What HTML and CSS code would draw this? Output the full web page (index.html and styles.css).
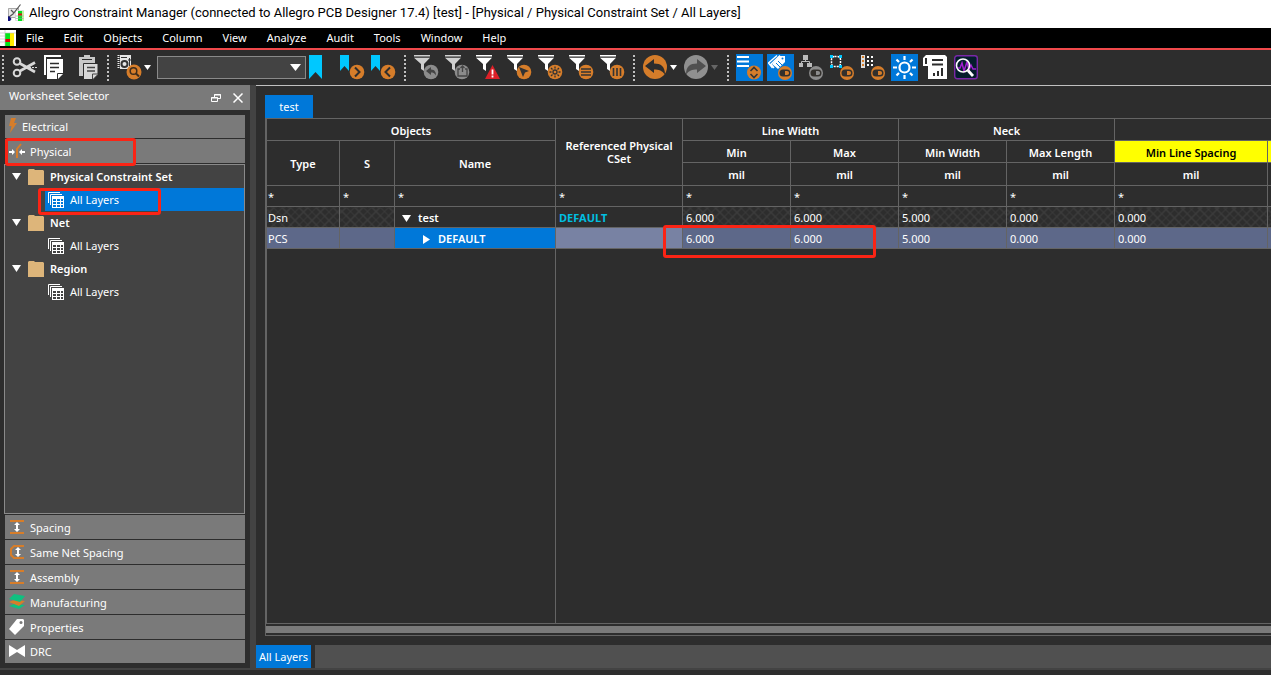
FILE: index.html
```html
<!DOCTYPE html>
<html lang="en">
  <head>
    <meta charset="UTF-8" />
    <meta name="viewport" content="width=device-width, initial-scale=1.0" />
    <title>Allegro Constraint Manager</title>
    <link rel="stylesheet" href="styles.css">
  </head>
  <body>
    <!-- Shared icon parts -->
    <svg class="sprite" aria-hidden="true">
      <symbol id="funnel" viewBox="0 0 25 25">
        <path d="M0 0h16v1.6H0zM0 2.8h16L10 9v7l-3-2V9z" />
      </symbol>
      <symbol id="flag" viewBox="0 0 25 25">
        <path fill="#00c8ff" d="M0 0h9v16l-4.500-5L0 16z" />
      </symbol>
      <symbol id="toggle" viewBox="0 0 14 14">
        <circle cx="7" cy="7" r="7" />
        <rect x="2.200" y="4.200" width="9.600" height="5.600" rx="2.800" fill="none" stroke="#33302c" stroke-width="1.400" />
        <path fill="#33302c" d="M3 5h4v4H3z" />
      </symbol>
      <symbol id="folder" viewBox="0 0 16 16">
        <path fill="#ddb57a" d="M0 1l1-1h5l1 1h8l1 1v14H0z" />
      </symbol>
      <symbol id="sheets" viewBox="0 0 16 16">
        <path fill="none" stroke="currentColor" d="M.5 11V.5H12M2.500 13V2.500H14" />
        <path fill="currentColor" fill-rule="evenodd" d="M4 4h12v12H4zM5 7v2h3V7zM9 7v2h3V7zM13 7v2h2V7zM5 10v2h3v-2zM9 10v2h3v-2zM13 10v2h2v-2zM5 13v2h3v-2zM9 13v2h3v-2zM13 13v2h2v-2z" />
      </symbol>
      <symbol id="spacing" viewBox="0 0 16 16">
        <path fill="#d67d2a" d="M1 1h14v2H1zM1 13h14v2H1z" />
        <path fill="#fff" d="M8 3l3 3H9v4h2l-3 3-3-3h2V6H5z" />
      </symbol>
    </svg>

    <header class="titlebar">
      <svg width="16" height="18" viewBox="0 0 16 18">
        <path fill="#e8e8e8" stroke="#888" stroke-width=".7" d="M.5 4.500h10v9H.5z" />
        <path fill="#fff" stroke="#ccc" stroke-width=".6" d="M7.500 6.500h8v10h-8z" />
        <path fill="#00e020" d="M10 7h4v10h-4z" />
        <path fill="#c8f0a0" d="M14 7h2v10h-2z" />
        <path fill="#e01010" d="M10 9.500h4v2h-4z" />
        <path stroke="#999" stroke-width=".6" d="M7.500 12h8M7.500 14.500h8" />
        <path fill="none" stroke="#555" stroke-width="1.200" d="M12.500 .5L5 10l-4 3M3 6l3 3" />
        <path fill="#10107a" d="M0 12l2 1 1.500 2-1.500 2H0z" />
      </svg>
      <h1>Allegro Constraint Manager (connected to Allegro PCB Designer 17.4) [test] - [Physical / Physical Constraint Set / All Layers]</h1>
    </header>

    <nav class="menubar">
      <svg width="16" height="16" viewBox="0 0 16 16">
        <path fill="#fff" d="M0 0h16v16H0z" />
        <path fill="#00e818" d="M5 3h5v13H5z" />
        <path fill="#ffee00" d="M10 3h4v13h-4z" />
        <path fill="#e00000" d="M5 9h5v3H5z" />
        <path stroke="#bbb" stroke-width=".6" d="M0 3h16M0 6h5M0 9h5M0 12h5M5 0v16" />
      </svg>
      <button>File</button>
      <button>Edit</button>
      <button>Objects</button>
      <button>Column</button>
      <button>View</button>
      <button>Analyze</button>
      <button>Audit</button>
      <button>Tools</button>
      <button>Window</button>
      <button>Help</button>
    </nav>

    <div class="toolbar">
      <span class="grip"></span>
      <button class="tool" aria-label="Cut">
        <svg viewBox="0 0 25 25">
          <g fill="none" stroke="#d8d8d8" stroke-width="2">
            <circle cx="5" cy="6.500" r="3.300" />
            <circle cx="5" cy="18" r="3.300" />
            <path stroke-width="2.600" d="M8 8.500l15 8.500M8 16l15-8.500" />
            <path stroke-width="1" stroke-dasharray="2 1" d="M14 12.500h11" />
          </g>
        </svg>
      </button>
      <button class="tool" aria-label="Copy">
        <svg viewBox="0 0 25 25">
          <path fill="none" stroke="#fff" stroke-width="2" d="M2 20V1h16" />
          <path fill="#fff" d="M4 4h16v15l-5 5H4z" />
          <path stroke="#2d2d2d" stroke-width="1.600" d="M7 8.500h9M7 12.500h9M7 16.500h5" />
          <path fill="none" stroke="#2d2d2d" d="M14.500 24v-5.500H20" />
        </svg>
      </button>
      <button class="tool" aria-label="Paste">
        <svg viewBox="0 0 25 25">
          <path fill="#c8c8c8" d="M5 2h5V0h6v2h5v19H5z" />
          <path stroke="#2d2d2d" d="M8 4.500h10" />
          <path fill="#d8d8d8" stroke="#2d2d2d" d="M9.500 8.500H24v11l-5 5H9.500z" />
          <path stroke="#444" stroke-width="1.500" d="M13 12.500h8M13 16h8" />
          <path fill="none" stroke="#444" d="M18.500 24v-5H24" />
        </svg>
      </button>
      <span class="grip"></span>
      <button class="tool split" aria-label="Find">
        <svg viewBox="0 0 25 25">
          <path fill="#e6e6e6" d="M3 0h11v14H3z" />
          <path stroke="#eee" stroke-width="2" stroke-dasharray="1 1" d="M1.500 0v14" />
          <circle cx="7.500" cy="9" r="3" fill="none" stroke="#333" stroke-width="2" />
          <path fill="none" stroke="#333" d="M4 2.500h6M12.500 3v8M11 5h3" />
          <circle cx="17" cy="17" r="7.500" fill="#d67d2a" />
          <circle cx="16.500" cy="16" r="3.300" fill="none" stroke="#402d1b" stroke-width="1.500" />
          <path stroke="#402d1b" stroke-width="2" d="M19 18.500l3 3" />
        </svg>
        <i class="caret"></i>
      </button>
      <label class="combo" aria-label="Search text">
        <select><option></option></select>
      </label>
      <button class="tool" aria-label="Bookmark">
        <svg viewBox="0 0 25 25"><path fill="#00c8ff" d="M0 0h13v24l-6.500-7L0 24z" /></svg>
      </button>
      <button class="tool" aria-label="Next bookmark">
        <svg viewBox="0 0 25 25">
          <use href="#flag" />
          <circle cx="17" cy="17" r="7.300" fill="#d67d2a" />
          <path fill="none" stroke="#2d2d2d" stroke-width="2" d="M15 12.500l4.500 4.500-4.500 4.500" />
        </svg>
      </button>
      <button class="tool" aria-label="Previous bookmark">
        <svg viewBox="0 0 25 25">
          <use href="#flag" />
          <circle cx="17" cy="17" r="7.300" fill="#d67d2a" />
          <path fill="none" stroke="#2d2d2d" stroke-width="2" d="M19 12.500L14.500 17l4.500 4.500" />
        </svg>
      </button>
      <span class="grip"></span>

      <!-- Filters -->
      <button class="tool" aria-label="Undo filter">
        <svg viewBox="0 0 25 25">
          <use href="#funnel" fill="#d0d0d0" />
          <circle cx="17" cy="17" r="7.300" fill="#8c8c8c" />
          <path fill="#444" d="M12 16l5-4v2.500c4 0 5 3 5 6-1.500-2.500-3-3-5-3V20z" />
        </svg>
      </button>
      <button class="tool" aria-label="Save filter">
        <svg viewBox="0 0 25 25">
          <use href="#funnel" fill="#d0d0d0" />
          <circle cx="17" cy="17" r="7.300" fill="#8c8c8c" />
          <path fill="none" stroke="#444" stroke-width="1.300" d="M15 14h-2v7h9v-7h-2M17.500 11v6M15.500 13l2-2 2 2" />
        </svg>
      </button>
      <button class="tool" aria-label="Filter errors">
        <svg viewBox="0 0 25 25">
          <use href="#funnel" fill="#fff" />
          <path fill="#dc2028" d="M16.500 10L24 24H9z" />
          <path stroke="#fff" stroke-width="1.800" d="M16.500 14.500v5M16.500 20.500v2" />
        </svg>
      </button>
      <button class="tool" aria-label="Filter selection">
        <svg viewBox="0 0 25 25">
          <use href="#funnel" fill="#fff" />
          <circle cx="17" cy="17" r="7.300" fill="#d67d2a" />
          <path fill="#333" d="M12 12l10 4-4 1.500-2 4.500z" />
        </svg>
      </button>
      <button class="tool" aria-label="Filter highlighted">
        <svg viewBox="0 0 25 25">
          <use href="#funnel" fill="#fff" />
          <circle cx="17" cy="17" r="7.300" fill="#d67d2a" />
          <circle cx="17" cy="17" r="2" fill="none" stroke="#333" stroke-width="1.300" />
          <path stroke="#333" stroke-width="1.300" d="M17 11.500v2M17 20.500v2M11.500 17h2M20.500 17h2M13 13l1.500 1.500M19.500 19.500L21 21M13 21l1.500-1.500M19.500 14.500L21 13" />
        </svg>
      </button>
      <button class="tool" aria-label="Filter rows">
        <svg viewBox="0 0 25 25">
          <use href="#funnel" fill="#fff" />
          <circle cx="17" cy="17" r="7.300" fill="#d67d2a" />
          <path stroke="#333" stroke-width="1.600" d="M12 14h10M12 17h10M12 20h10" />
        </svg>
      </button>
      <button class="tool" aria-label="Filter columns">
        <svg viewBox="0 0 25 25">
          <use href="#funnel" fill="#fff" />
          <circle cx="17" cy="17" r="7.300" fill="#d67d2a" />
          <path stroke="#333" stroke-width="1.600" d="M13.500 13v8M17 13v8M20.500 13v8" />
        </svg>
      </button>
      <span class="grip"></span>
      <button class="tool split" aria-label="Undo">
        <svg viewBox="0 0 25 25">
          <circle cx="12" cy="12" r="12" fill="#d67d2a" />
          <path fill="#2d2d2d" d="M2 11l9-7v4.500c7 0 11 3 11 11-3-4-6-5-11-5V18z" />
        </svg>
        <i class="caret"></i>
      </button>
      <button class="tool split" aria-label="Redo" disabled>
        <svg viewBox="0 0 25 25">
          <circle cx="12" cy="12" r="12" fill="#909090" />
          <path fill="#505050" d="M22 11l-9-7v4.500c-7 0-11 3-11 11 3-4 6-5 11-5V18z" />
        </svg>
        <i class="caret"></i>
      </button>
      <span class="grip"></span>

      <!-- View toggles -->
      <button class="tool on" aria-label="Expand rows">
        <svg viewBox="0 0 25 25">
          <path stroke="#fff" stroke-width="2" d="M0 2h12M0 6.500h12M0 11h12" />
          <circle cx="17" cy="17.500" r="7" fill="#d67d2a" />
          <path fill="none" stroke="#333" stroke-width="1.600" d="M13.500 16l3.500-3.500 3.500 3.500M13.500 19l3.500 3.500 3.500-3.500" />
        </svg>
      </button>
      <button class="tool on" aria-label="Toggle properties">
        <svg viewBox="0 0 25 25">
          <path fill="none" stroke="#fff" stroke-width="1.300" d="M9 .5L.5 8l4 5M12 .5L3 9l3 4" />
          <path fill="#fff" d="M11 1h6v6l-7 7-6-5z" />
          <circle cx="14.500" cy="3.500" r="1" fill="#0078d9" />
          <path stroke="#0078d9" d="M8 8l4 4M10 6l4 4" />
          <use href="#toggle" x="10" y="11" width="14" height="14" fill="#d67d2a" />
        </svg>
      </button>
      <button class="tool" aria-label="Toggle hierarchy">
        <svg viewBox="0 0 25 25">
          <path fill="#bbb" d="M4 0h5v5H4zM0 8h4v4H0zM8 8h5v4H8z" />
          <path fill="none" stroke="#bbb" d="M6.500 5v2M2.500 9V6.500h8V9" />
          <use href="#toggle" x="10" y="11" width="14" height="14" fill="#8c8c8c" />
        </svg>
      </button>
      <button class="tool" aria-label="Toggle region">
        <svg viewBox="0 0 25 25">
          <rect x="1.500" y="1.500" width="9" height="10" rx="3" fill="none" stroke="#fff" stroke-width="1.500" stroke-dasharray="2 1" />
          <path fill="#00c8ff" d="M0 0h3v3H0zM9 0h3v3H9zM0 10h3v3H0zM9 10h3v3H9z" />
          <use href="#toggle" x="10" y="11" width="14" height="14" fill="#d67d2a" />
        </svg>
      </button>
      <button class="tool" aria-label="Toggle columns">
        <svg viewBox="0 0 25 25">
          <path fill="none" stroke="#ddd" stroke-width="4" d="M2 0v13" />
          <path stroke="#d67d2a" stroke-width="2" stroke-dasharray="2 2" d="M2 1v12" />
          <path stroke="#fff" stroke-width="2" stroke-dasharray="2 2" d="M7 1v12M11 1v12" />
          <use href="#toggle" x="10" y="11" width="14" height="14" fill="#d67d2a" />
        </svg>
      </button>
      <button class="tool on" aria-label="Highlight">
        <svg viewBox="0 0 25 25">
          <g fill="none" stroke="#fff" stroke-width="2.200">
            <circle cx="12.500" cy="12.500" r="5" />
            <path d="M12.500 1v4M12.500 20v4M1 12.500h4M20 12.500h4M4.500 4.500L7 7M18 18l2.500 2.500M4.500 20.500L7 18M18 7l2.500-2.500" />
          </g>
        </svg>
      </button>
      <button class="tool" aria-label="Report">
        <svg viewBox="0 0 25 25">
          <path fill="#fff" d="M3 0h19l2 2v22H5V11H0V3z" />
          <path fill="#2d2d2d" d="M2 3h2v6H2zM9 4h11v2H9zM9 8.500h11v2H9zM10 18h2v3h-2zM14 16h2v5h-2zM18 13h2v8h-2z" />
        </svg>
      </button>
      <button class="tool" aria-label="Waveform viewer">
        <svg viewBox="0 0 25 25">
          <rect x=".7" y=".7" width="22.600" height="23" rx="2.500" fill="#041e2c" stroke="#7a28a8" stroke-width="1.400" />
          <path fill="none" stroke="#a020d0" stroke-width="1.500" d="M3 13h3l2-5 2 8 3-9 2 8 2-5 2 4h3" />
          <circle cx="9" cy="10.500" r="6.500" fill="none" stroke="#fff" stroke-width="1.600" />
          <path stroke="#fff" stroke-width="2.800" d="M14 15.500l5 5.500" />
        </svg>
      </button>
    </div>

    <div class="content">
      <aside class="selector">
        <div class="selector-head">
          <h2>Worksheet Selector</h2>
          <button aria-label="Float">
            <svg viewBox="0 0 10 10"><path fill="none" stroke="#fff" d="M3.500 4V1.500h6v4H7M3 2h7M.5 4.500h6v4h-6zM0 5h7" /></svg>
          </button>
          <button aria-label="Close">
            <svg viewBox="0 0 10 10"><path stroke="#fff" stroke-width="1.500" d="M.5.5l9 9M9.500.5l-9 9" /></svg>
          </button>
        </div>

        <div class="accordion">
          <button class="domain electrical">
            <svg viewBox="0 0 16 16"><path fill="#d67d2a" d="M5 0h5L8 5h3L4 15l1.500-7H3z" /></svg>
            Electrical
          </button>
          <button class="domain marked">
            <svg viewBox="0 0 16 16">
              <path fill="none" stroke="#d67d2a" stroke-width="2" d="M8 15V6l4-5" />
              <path fill="#fff" d="M0 8h3V6l3 3-3 3v-2H0zM16 8h-3V6l-3 3 3 3v-2h3z" />
            </svg>
            Physical
          </button>

          <div class="tree">
            <div class="node"><i class="caret"></i><svg><use href="#folder" /></svg>Physical Constraint Set</div>
            <a class="leaf active" href="#"><svg><use href="#sheets" /></svg>All Layers</a>
            <div class="node"><i class="caret"></i><svg><use href="#folder" /></svg>Net</div>
            <a class="leaf" href="#"><svg><use href="#sheets" /></svg>All Layers</a>
            <div class="node"><i class="caret"></i><svg><use href="#folder" /></svg>Region</div>
            <a class="leaf" href="#"><svg><use href="#sheets" /></svg>All Layers</a>
          </div>

          <button class="domain"><svg><use href="#spacing" /></svg>Spacing</button>
          <button class="domain">
            <svg viewBox="0 0 16 16">
              <path fill="none" stroke="#d67d2a" stroke-width="2" d="M15 2H5L2 5v6l3 3h10" />
              <path fill="#fff" d="M9 3l3 3h-2v4h2l-3 3-3-3h2V6H6z" />
            </svg>
            Same Net Spacing
          </button>
          <button class="domain"><svg><use href="#spacing" /></svg>Assembly</button>
          <button class="domain">
            <svg viewBox="0 0 16 16">
              <path fill="#10c080" d="M0 12l5-2 11 1-6 4z" />
              <path fill="#d67d2a" d="M0 8l5-2 11 1-6 5z" />
              <path fill="#10c080" d="M0 5l5-5 11 2-5 6z" />
            </svg>
            Manufacturing
          </button>
          <button class="domain">
            <svg viewBox="0 0 16 16">
              <path fill="#fff" d="M8 0h6l1 1v6l-9 9-6-6z" />
              <circle cx="12" cy="3.500" r="1.500" fill="#7a7a7a" />
            </svg>
            Properties
          </button>
          <button class="domain drc">
            <svg viewBox="0 0 16 16"><path fill="#fff" d="M0 2l8 5 8-5v12l-8-5-8 5z" /></svg>
            DRC
          </button>
        </div>
      </aside>

      <main>
        <button class="tab">test</button>
        <div class="grid">
          <table>
            <colgroup>
              <col class="c-type" /><col class="c-s" /><col class="c-name" /><col class="c-cset" />
              <col class="c-num" /><col class="c-num" /><col class="c-num" /><col class="c-num" />
              <col class="c-gap" /><col class="c-gap" />
            </colgroup>
            <thead>
              <tr>
                <th colspan="3">Objects</th>
                <th rowspan="3">Referenced Physical CSet</th>
                <th colspan="2">Line Width</th>
                <th colspan="2">Neck</th>
                <th colspan="2"></th>
              </tr>
              <tr>
                <th rowspan="2">Type</th>
                <th rowspan="2">S</th>
                <th rowspan="2">Name</th>
                <th>Min</th>
                <th>Max</th>
                <th>Min Width</th>
                <th>Max Length</th>
                <th class="warn">Min Line Spacing</th>
                <th class="warn"></th>
              </tr>
              <tr class="units">
                <th>mil</th>
                <th>mil</th>
                <th>mil</th>
                <th>mil</th>
                <th>mil</th>
                <th></th>
              </tr>
            </thead>
            <tbody>
              <tr>
                <td>*</td><td>*</td><td>*</td><td>*</td><td>*</td><td>*</td><td>*</td><td>*</td><td>*</td><td></td>
              </tr>
              <tr>
                <td class="hatch">Dsn</td>
                <td class="hatch"></td>
                <td class="name"><i class="caret"></i>test</td>
                <td class="ref">DEFAULT</td>
                <td class="hatch">6.000</td>
                <td class="hatch">6.000</td>
                <td class="hatch">5.000</td>
                <td class="hatch">0.000</td>
                <td class="hatch">0.000</td>
                <td class="hatch"></td>
              </tr>
              <tr class="selected">
                <td>PCS</td>
                <td></td>
                <td class="name child"><i class="caret right"></i>DEFAULT</td>
                <td class="current"></td>
                <td>6.000</td>
                <td>6.000</td>
                <td>5.000</td>
                <td>0.000</td>
                <td>0.000</td>
                <td></td>
              </tr>
              <tr class="rest"><td colspan="3"></td><td colspan="7"></td></tr>
            </tbody>
          </table>
          <div class="callout"></div>
        </div>
        <div class="scroll"><span></span></div>
        <div class="sheets">
          <button class="tab">All Layers</button>
          <span class="strip"></span>
        </div>
      </main>
    </div>
    <footer></footer>
  </body>
</html>
```
FILE: styles.css
```css
*,
*::before,
*::after {
  margin: 0;
  padding: 0;
  box-sizing: border-box;
}

body {
  display: flex;
  flex-direction: column;
  height: 100vh;
  overflow: hidden;
  background-color: #2d2d2d;
  color: white;
  font-family: 'Noto Sans', sans-serif;
  font-size: 11px;
  line-height: 14px;
}

button {
  font: inherit;
  color: inherit;
  background: none;
  border: none;
}

svg {
  display: block;
  flex: none;
}

.sprite {
  position: absolute;
  width: 0;
  height: 0;
}

.caret {
  flex: none;
  width: 9px;
  height: 7px;
  background-color: white;
  clip-path: polygon(0 0, 100% 0, 50% 100%);
}

.caret.right {
  width: 7px;
  height: 9px;
  clip-path: polygon(0 0, 100% 50%, 0 100%);
}

/* Title and menu */
.titlebar {
  display: flex;
  align-items: center;
  gap: 5px;
  height: 28px;
  padding: 0 8px 2px;
  background-color: white;
  color: black;
}

h1 {
  font-family: Roboto, sans-serif;
  font-size: 13px;
  font-weight: 400;
  line-height: 18px;
  white-space: nowrap;
}

.menubar {
  display: flex;
  align-items: center;
  height: 22px;
  background-color: black;
  border-bottom: 2px solid #f0494b;
}

.menubar button {
  padding: 0 10px;
}

/* Toolbar */
.toolbar {
  display: flex;
  align-items: center;
  height: 35px;
  padding-left: 2px;
}

.grip {
  width: 2px;
  height: 26px;
  margin: 0 7px 0 3px;
  background: repeating-linear-gradient(#c0c0c0 0 2px, transparent 2px 4px);
}

.grip:first-child {
  margin-left: 0;
}

.tool {
  display: flex;
  align-items: center;
  width: 27px;
  height: 27px;
  margin-right: 4px;
  padding: 1px;
}

.tool svg {
  width: 25px;
  height: 25px;
}

.tool.on {
  background-color: #0078d9;
}

.split {
  width: 37px;
  gap: 2px;
}

.split .caret {
  width: 7px;
  height: 5px;
}

.split:disabled .caret {
  background-color: #666;
}

.combo {
  position: relative;
  width: 149px;
  height: 23px;
  margin-right: 2px;
}

.combo select {
  width: 100%;
  height: 100%;
  appearance: none;
  background-color: #434343;
  border: 1px solid #8a8a8a;
}

.combo::after {
  content: '';
  position: absolute;
  top: 8px;
  right: 5px;
  width: 11px;
  height: 7px;
  background-color: white;
  clip-path: polygon(0 0, 100% 0, 50% 100%);
}

/* Worksheet selector */
.content {
  display: flex;
  flex: 1;
  min-height: 0;
}

.selector {
  display: flex;
  flex-direction: column;
  flex: none;
  width: 256px;
  border-right: 6px solid #434343;
}

.selector-head {
  display: flex;
  align-items: center;
  gap: 12px;
  height: 25px;
  padding: 0 7px 0 9px;
  background-color: #7a7a7a;
}

.selector-head h2 {
  flex: 1;
  padding-bottom: 4px;
  font-size: 11px;
  font-weight: 400;
}

.selector-head svg {
  width: 10px;
  height: 10px;
}

.accordion {
  display: flex;
  flex-direction: column;
  flex: 1;
  gap: 1px;
  padding: 5px 5px 5px 4px;
}

.domain {
  position: relative;
  display: flex;
  align-items: center;
  gap: 5px;
  height: 24px;
  margin-left: 1px;
  padding-top: 2px;
  padding-left: 4px;
  background-color: #7a7a7a;
}

.domain svg {
  width: 16px;
  height: 16px;
  margin-bottom: 2px;
}

.electrical,
.drc {
  height: 23px;
  padding-top: 0;
}

.electrical {
  gap: 0;
  padding-left: 1px;
}

.tree {
  flex: 1;
  background-color: #434343;
  border: 1px solid #8a8a8a;
}

.node,
.leaf {
  display: flex;
  align-items: center;
  height: 23px;
}

.tree svg {
  width: 16px;
  height: 16px;
}

.node {
  gap: 6px;
  padding-left: 7px;
  font-weight: 600;
}

.node svg {
  margin-left: 1px;
}

.leaf {
  position: relative;
  gap: 6px;
  margin-left: 40px;
  padding-left: 3px;
  color: white;
  text-decoration: none;
}

.leaf.active {
  background-color: #0078d9;
}

/* Red frames drawn over the marked items */
.marked::after,
.leaf.active::after,
.callout {
  content: '';
  position: absolute;
  z-index: 1;
  border: 3px solid #fb2415;
  border-radius: 3px;
}

.marked::after {
  top: -1px;
  left: 0;
  width: 131px;
  height: 28px;
}

.leaf.active::after {
  top: 0;
  left: -7px;
  width: 123px;
  height: 27px;
}

.callout {
  top: 107px;
  left: 397px;
  width: 213px;
  height: 33px;
}

/* Worksheet */
main {
  display: flex;
  flex-direction: column;
  flex: 1;
  min-width: 0;
  padding-top: 9px;
  border-top: 1px solid #c0c0c0;
}

.tab {
  align-self: flex-start;
  width: 48px;
  height: 23px;
  margin-left: 9px;
  background-color: #0078d9;
}

.grid {
  position: relative;
  flex: 1;
  min-height: 0;
  margin-left: 9px;
  border-left: 1px solid #646464;
  overflow: hidden;
}

table {
  width: 1100px;
  height: 100%;
  table-layout: fixed;
  border-collapse: collapse;
}

.c-type {
  width: 73px;
}

.c-s {
  width: 55px;
}

.c-name {
  width: 161px;
}

.c-cset {
  width: 127px;
}

.c-num {
  width: 108px;
}

.c-gap {
  width: 153px;
}

th,
td {
  height: 21px;
  padding-top: 2px;
  border: 1px solid #646464;
}

th {
  height: 22px;
  font-weight: 600;
  line-height: 13px;
}

.units th {
  height: 23px;
  padding-top: 0;
}

th[rowspan] {
  padding-top: 0;
}

td {
  padding-left: 3px;
  white-space: nowrap;
}

td:first-child {
  padding-left: 1px;
}

.warn {
  background-color: #ffff00;
  color: black;
}

.hatch {
  background:
    repeating-linear-gradient(45deg, #3c3c3c 0 1px, transparent 1px 6px),
    repeating-linear-gradient(-45deg, #3c3c3c 0 1px, transparent 1px 6px);
}

.name {
  padding-left: 7px;
  font-weight: 600;
}

.name .caret {
  display: inline-block;
  margin-right: 7px;
}

.name.child {
  padding-left: 28px;
  background-color: #0078d9;
}

.name .right {
  margin-right: 8px;
  vertical-align: -1px;
}

.ref {
  color: #00bfe0;
  font-weight: 700;
}

.selected {
  background-color: #5d6889;
}

.current {
  background-color: #7882a3;
}

.rest td {
  height: auto;
}

.scroll {
  height: 12px;
  margin: 0 0 9px 9px;
  padding-top: 2px;
  border: 1px solid #646464;
  border-width: 0 0 1px 1px;
}

.scroll span {
  display: block;
  height: 7px;
  background-color: #7a7a7a;
}

.sheets {
  display: flex;
  gap: 4px;
}

.sheets .tab {
  width: 55px;
  margin-left: 0;
}

.strip {
  flex: 1;
  background-color: #505050;
}

footer {
  height: 7px;
  border-top: 2px solid #434343;
}
```
